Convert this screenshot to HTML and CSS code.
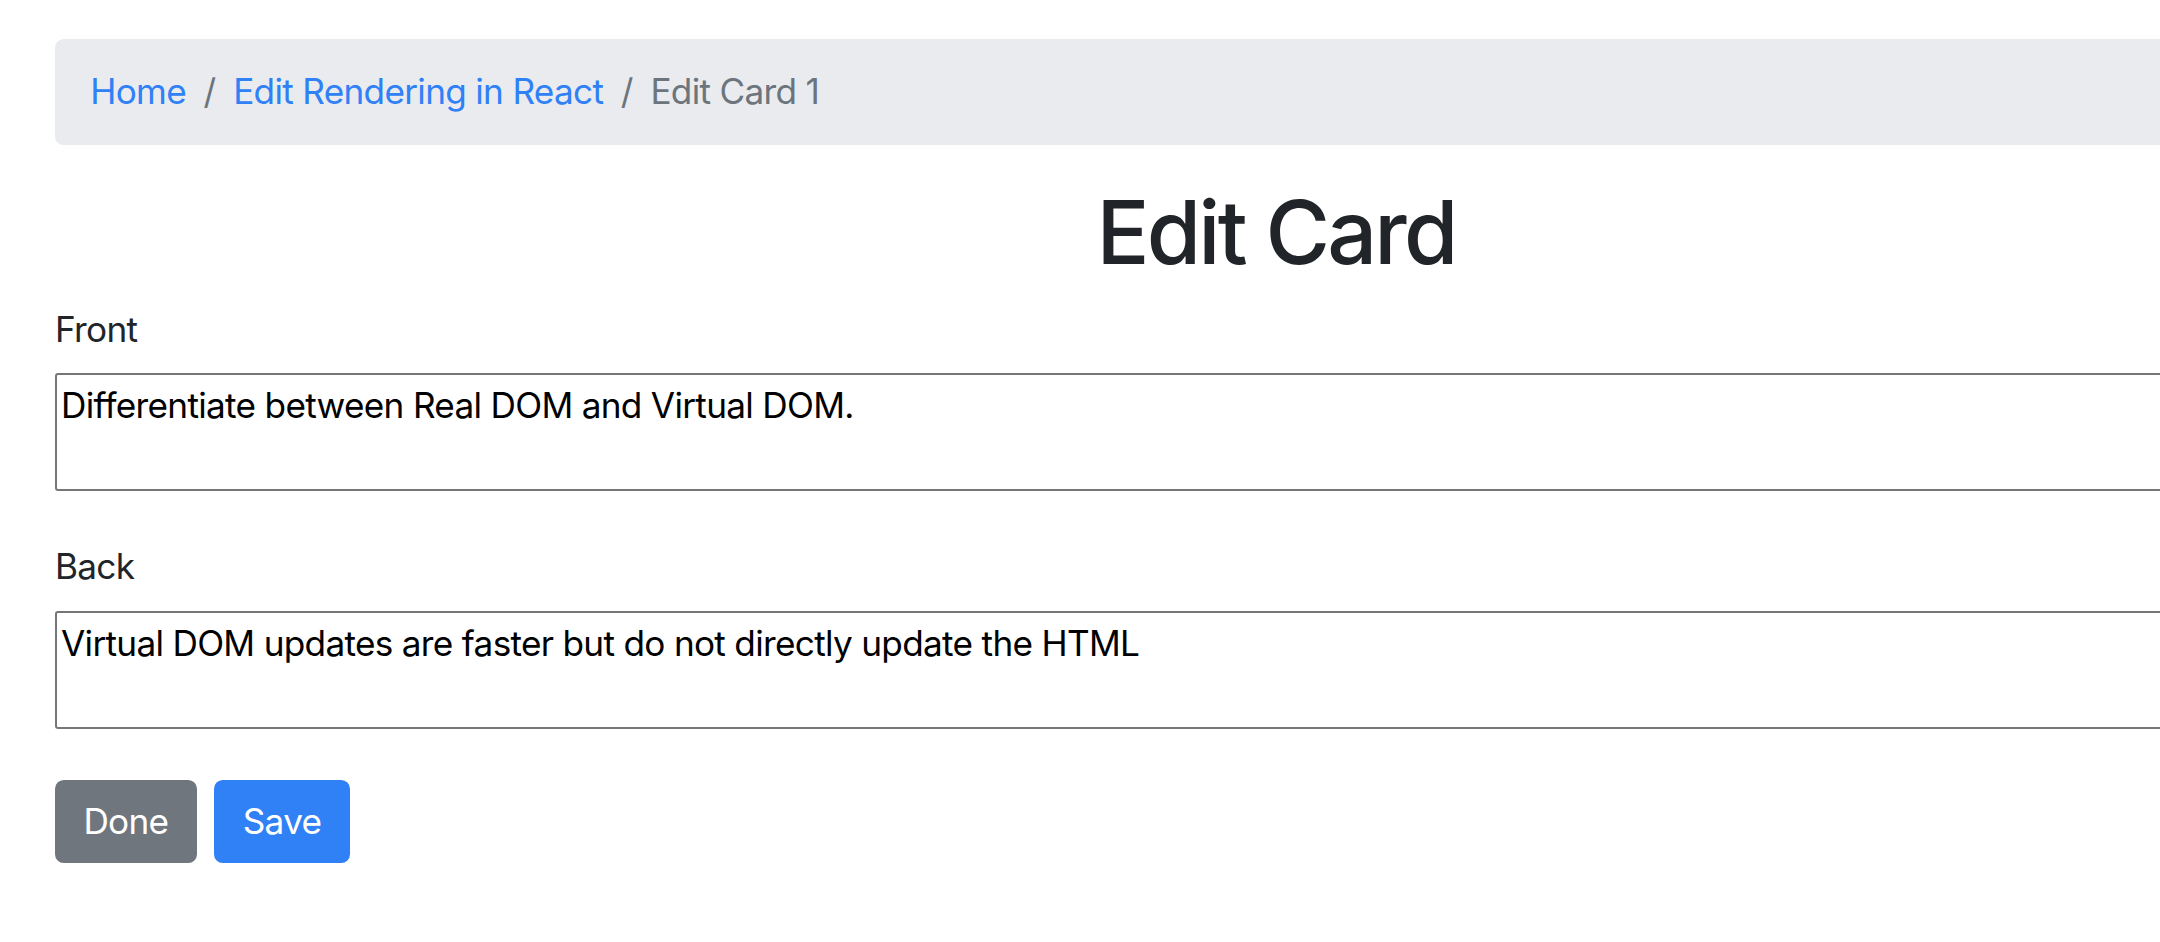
FILE: index.html
```html
<!DOCTYPE html>
<html lang="en">
  <head>
    <meta charset="UTF-8" />
    <meta name="viewport" content="width=device-width, initial-scale=1.0" />
    <title>Edit Card</title>
    <link rel="stylesheet" href="styles.css">
  </head>
  <body>
    <div class="container">
      <nav aria-label="breadcrumb">
        <ol class="breadcrumb">
          <li class="breadcrumb-item"><a href="#">Home</a></li>
          <li class="breadcrumb-item"><a href="#">Edit Rendering in React</a></li>
          <li class="breadcrumb-item active">Edit Card 1</li>
        </ol>
      </nav>
      <h1>Edit Card</h1>
      <form id="form" class="form">
        <div class="form-group">
          <label for="front">Front</label>
          <textarea id="front" name="front" rows="2">Differentiate between Real DOM and Virtual DOM.</textarea>
        </div>
        <div class="form-group">
          <label for="back">Back</label>
          <textarea id="back" name="back" rows="2">Virtual DOM updates are faster but do not directly update the HTML</textarea>
        </div>
        <div class="actions">
          <button type="button" class="btn btn-secondary">Done</button>
          <button type="submit" class="btn btn-primary">Save</button>
        </div>
      </form>
    </div>
  </body>
</html>
```

FILE: styles.css
```css
:root {
  --primary-color: #3080f6;
  --secondary-color: #70767d;
  --muted-color: #6c757d;
}
* {
  box-sizing: border-box;
}
html {
  font-size: 35.2px;
}
body {
  margin: 0;
  font-family: Inter, "Noto Sans", sans-serif;
  font-size: 1rem;
  line-height: 1.5;
  letter-spacing: -0.02em;
  color: #212529;
  background-color: #fff;
  overflow-x: hidden;
}

.container {
  margin-left: 55px;
  width: 2442px;
}

.breadcrumb {
  display: flex;
  flex-wrap: wrap;
  list-style: none;
  margin: 39px 0 1rem;
  padding: 0.75rem 1rem;
  background-color: #e9ebef;
  border-radius: 0.25rem;
}

.breadcrumb a {
  color: var(--primary-color);
  text-decoration: none;
}

.breadcrumb-item + .breadcrumb-item {
  padding-left: 0.5rem;
}

.breadcrumb-item + .breadcrumb-item::before {
  content: "/";
  padding-right: 0.5rem;
  color: var(--muted-color);
}

.breadcrumb-item.active {
  color: var(--muted-color);
}

h1 {
  margin: 0 0 0.5rem;
  font-size: 2.5rem;
  font-weight: 500;
  line-height: 1.2;
  letter-spacing: -0.032em;
  text-align: center;
}

.form-group {
  margin-bottom: 1rem;
}

.form-group label {
  display: inline-block;
  margin-bottom: 0.5rem;
}

.form-group textarea {
  width: 100%;
  height: 118px;
  margin: 0;
  padding: 4px;
  font-family: inherit;
  font-size: inherit;
  line-height: inherit;
  letter-spacing: inherit;
  color: #000;
  border: 2px solid #767676;
  border-radius: 3px;
  overflow: auto;
  resize: vertical;
}

.actions {
  display: flex;
  gap: 0.5rem;
  padding-top: 2px;
}

.btn {
  display: inline-block;
  padding: 0.375rem 0.75rem;
  font-family: inherit;
  font-size: 1rem;
  font-weight: 400;
  line-height: 1.5;
  letter-spacing: inherit;
  color: #fff;
  border: 2px solid transparent;
  border-radius: 0.25rem;
  cursor: pointer;
}

.btn-secondary {
  background-color: var(--secondary-color);
  border-color: var(--secondary-color);
}

.btn-primary {
  background-color: var(--primary-color);
  border-color: var(--primary-color);
}
```
